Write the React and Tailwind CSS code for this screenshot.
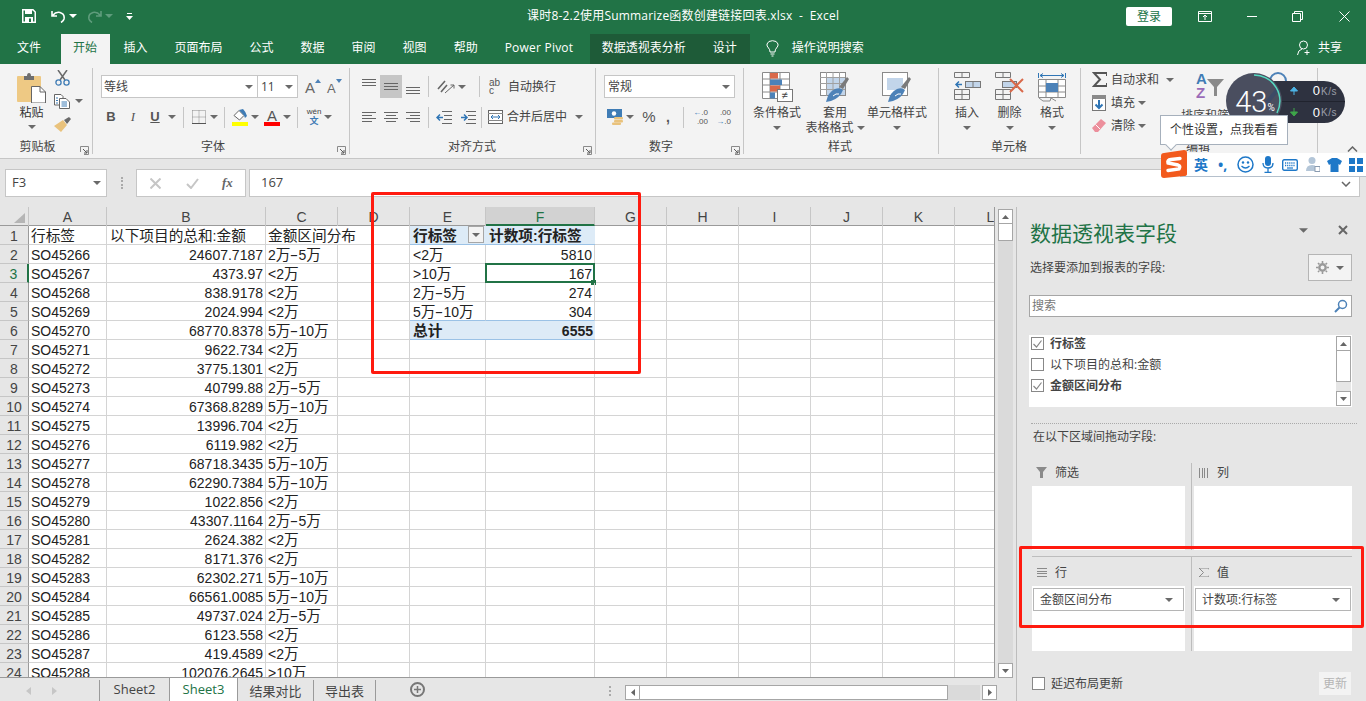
import React from 'react';

const rows = [
  ['SO45266', '24607.7187', '2万-5万'],
  ['SO45267', '4373.97', '<2万'],
  ['SO45268', '838.9178', '<2万'],
  ['SO45269', '2024.994', '<2万'],
  ['SO45270', '68770.8378', '5万-10万'],
  ['SO45271', '9622.734', '<2万'],
  ['SO45272', '3775.1301', '<2万'],
  ['SO45273', '40799.88', '2万-5万'],
  ['SO45274', '67368.8289', '5万-10万'],
  ['SO45275', '13996.704', '<2万'],
  ['SO45276', '6119.982', '<2万'],
  ['SO45277', '68718.3435', '5万-10万'],
  ['SO45278', '62290.7384', '5万-10万'],
  ['SO45279', '1022.856', '<2万'],
  ['SO45280', '43307.1164', '2万-5万'],
  ['SO45281', '2624.382', '<2万'],
  ['SO45282', '8171.376', '<2万'],
  ['SO45283', '62302.271', '5万-10万'],
  ['SO45284', '66561.0085', '5万-10万'],
  ['SO45285', '49737.024', '2万-5万'],
  ['SO45286', '6123.558', '<2万'],
  ['SO45287', '419.4589', '<2万'],
  ['SO45288', '102076.2645', '>10万'],
];

const pivot = {
  1: ['行标签', '计数项:行标签'],
  2: ['<2万', '5810'],
  3: ['>10万', '167'],
  4: ['2万-5万', '274'],
  5: ['5万-10万', '304'],
  6: ['总计', '6555'],
};

const cols = ['A', 'B', 'C', 'D', 'E', 'F', 'G', 'H', 'I', 'J', 'K', 'L'];
const gridCols = 'grid grid-rows-[19px] grid-cols-[29px_78px_159px_72px_72px_76px_109px_72px_72px_72px_72px_72px_72px]';

// the sheet font has wider CJK than latin and a long dash
const CellText = ({ text }) =>
  text.split(/([\u4e00-\u9fff]+|-)/).map((part, i) => {
    if (part === '-') {
      return <span key={i} className="inline-block w-[8px] text-center scale-x-[1.8]">-</span>;
    }
    if (/[\u4e00-\u9fff]/.test(part)) {
      return <span key={i} className="text-[14.67px]">{part}</span>;
    }
    return part;
  });

// small dropdown triangle
const Caret = ({ className = '', fill = '#6a6a6a' }) => (
  <svg width="8" height="4" viewBox="0 0 8 4" className={`shrink-0 ${className}`}>
    <path d="M0 0H8L4 4Z" fill={fill} />
  </svg>
);

const CaretSlot = ({ className = 'w-[10px]' }) => (
  <div className={`h-full flex items-center justify-center ${className}`}>
    <Caret />
  </div>
);

const Launcher = () => (
  <svg width="9" height="9" viewBox="0 0 9 9" className="absolute right-[3px] top-[8px]">
    <path d="M0.5 6V0.5H8.5V8.5H4" fill="none" stroke="#8a8a8a" />
    <path d="M3 3L7 7M7 4V7H4" fill="none" stroke="#5a5a5a" />
  </svg>
);

const Group = ({ className, label, labelClass = '', launcher = true, children }) => (
  <div className={`h-[86px] mt-[4px] border-r border-[#c6c6c6] flex flex-col shrink-0 ${className}`}>
    <div className="h-[70px]">{children}</div>
    <div className="h-[16px] relative">
      <div className={`pt-[1px] text-center text-[12px] leading-[16px] text-[#444] ${labelClass}`}>{label}</div>
      {launcher && <Launcher />}
    </div>
  </div>
);

const Sep = ({ className = '' }) => <div className={`w-px h-[21px] bg-[#c6c6c6] shrink-0 ${className}`} />;

const Lines = ({ bars, active = false }) => (
  <div className={`w-[22px] h-full flex items-center justify-center ${active ? 'bg-[#c6c6c6]' : ''}`}>
    <svg width="15" height="17" viewBox="0 0 15 17">
      {bars.map(([x, y, w], i) => (
        <rect key={i} x={x} y={y} width={w} height="1" fill="#666" />
      ))}
    </svg>
  </div>
);

const TopLines = [[0, 1, 14], [0, 4, 14], [0, 7, 14]];
const MidLines = [[0, 5, 14], [0, 8, 14], [0, 11, 14]];
const LowLines = [[0, 9, 14], [0, 12, 14], [0, 15, 14]];
const LeftLines = [[0, 3, 14], [0, 6, 10], [0, 9, 14], [0, 12, 10]];
const CenterLines = [[0, 3, 14], [2, 6, 10], [0, 9, 14], [2, 12, 10]];
const RightLines = [[0, 3, 14], [4, 6, 10], [0, 9, 14], [4, 12, 10]];

const PasteIcon = () => (
  <svg width="29" height="30" viewBox="0 0 29 30">
    <rect x="0" y="3" width="24" height="26" rx="1" fill="#eec984" />
    <path d="M7 3H10Q10 0 12 0Q14 0 14 3H17V7H7Z" fill="#6e6e6e" />
    <path d="M14.5 13.5H23L28.5 19V30H14.5Z" fill="#fff" stroke="#666" />
    <path d="M23 13.5V19H28.5" fill="none" stroke="#666" />
  </svg>
);

const CutIcon = () => (
  <svg width="15" height="16" viewBox="0 0 15 16">
    <path d="M3 0L10 10M12 0L5 10" stroke="#6a6a6a" strokeWidth="1.5" fill="none" />
    <circle cx="3.5" cy="12.5" r="2.6" stroke="#3f7cb5" strokeWidth="1.3" fill="none" />
    <circle cx="11.5" cy="12.5" r="2.6" stroke="#3f7cb5" strokeWidth="1.3" fill="none" />
  </svg>
);

const CopyIcon = () => (
  <svg width="16" height="15" viewBox="0 0 16 15">
    <path d="M0.5 0.5H7L9 2.5V11H0.5Z" fill="#fff" stroke="#666" />
    <path d="M5.5 4.5H12L15.5 8V14.5H5.5Z" fill="#fff" stroke="#666" />
    <path d="M2 4H4M2 6.5H4M2 9H4M7.5 8H13M7.5 10H13M7.5 12H13" stroke="#3f7cb5" />
  </svg>
);

const BrushIcon = () => (
  <svg width="17" height="15" viewBox="0 0 17 15">
    <path d="M10 3L15 0L17 2L13 7Z" fill="#6a6a6a" />
    <path d="M0 9L9 3L13 8L7 15Z" fill="#e9c27c" />
  </svg>
);

const BorderIcon = () => (
  <svg width="14" height="14" viewBox="0 0 14 14">
    <path d="M0.5 0.5H13.5V13M0.5 0.5V13M7 0.5V13M0.5 7H13.5" fill="none" stroke="#888" strokeDasharray="1 1" />
    <rect x="0" y="13" width="14" height="1" fill="#555" />
  </svg>
);

const FillIcon = () => (
  <svg width="16" height="17" viewBox="0 0 16 17">
    <path d="M2 6.5L7 1.5L12 6.5L7.5 11Z" fill="#fff" stroke="#666" />
    <path d="M7 1L11 0Q14 3 15 7L13 9L12 6.5Z" fill="#3f7cb5" />
    <rect x="0" y="13" width="16" height="4" fill="#ffff00" />
  </svg>
);

const FontColorIcon = () => (
  <div className="w-[16px] h-[17px] flex flex-col items-center">
    <span className="text-[15px] leading-[13px] text-[#555] font-['Liberation_Sans']">A</span>
    <span className="w-[16px] h-[4px] bg-[#ff0000]" />
  </div>
);

const OrientIcon = () => (
  <svg width="20" height="16" viewBox="0 0 20 16">
    <path d="M2 10L9 2M5 13L11 6" stroke="#666" strokeWidth="1.6" fill="none" />
    <path d="M9 14L18 6M18 6V9.5M18 6H14.5" stroke="#666" fill="none" />
  </svg>
);

const IndentIcon = ({ flip = false }) => (
  <svg width="16" height="13" viewBox="0 0 16 13">
    <path d="M6 0.5H16M8 4.5H16M8 8.5H16M6 12.5H16" stroke="#666" />
    {flip ? (
      <path d="M1 6.5H6M4 3.5L7 6.5L4 9.5" stroke="#2f75b5" strokeWidth="1.5" fill="none" />
    ) : (
      <path d="M1 6.5H7M4 3.5L1 6.5L4 9.5" stroke="#2f75b5" strokeWidth="1.5" fill="none" />
    )}
  </svg>
);

const MergeIcon = () => (
  <svg width="15" height="14" viewBox="0 0 15 14">
    <rect x="0.5" y="0.5" width="14" height="13" fill="#fff" stroke="#666" />
    <path d="M0 3.5H15M0 10.5H15" stroke="#888" />
    <path d="M3 7H12M5 5L3 7L5 9M10 5L12 7L10 9" stroke="#2f75b5" fill="none" />
  </svg>
);

const CurrencyIcon = () => (
  <svg width="17" height="16" viewBox="0 0 17 16">
    <rect x="0" y="0" width="15" height="9" fill="#3f7cb5" />
    <circle cx="7" cy="4.5" r="2.2" fill="#fff" />
    <rect x="7" y="8" width="9" height="2.5" rx="1" fill="#e9c27c" />
    <rect x="7" y="11" width="9" height="2.5" rx="1" fill="#e9c27c" />
    <rect x="5" y="13.5" width="9" height="2.5" rx="1" fill="#e9c27c" />
  </svg>
);

const CondIcon = () => (
  <div className="relative w-[31px] h-[30px]">
    <svg width="28" height="27" viewBox="0 0 28 27">
      <path d="M0.5 0.5H27.5V26.5H0.5ZM0.5 7H27.5M0.5 13H27.5M0.5 20H27.5M8 0V27M18 0V27" fill="#fff" stroke="#8a8a8a" />
      <rect x="8" y="1" width="8" height="5.5" fill="#d9694a" />
      <rect x="8" y="7.5" width="12" height="5.5" fill="#4d82b8" />
      <rect x="8" y="13.5" width="10" height="6" fill="#d9694a" />
      <rect x="8" y="20.5" width="5" height="6" fill="#4d82b8" />
    </svg>
    <span className="absolute right-0 bottom-0 w-[16px] h-[13px] bg-white border border-[#777] text-[11px] leading-[11px] text-center text-[#444] font-['Liberation_Sans']">≠</span>
  </div>
);

const TableFormatIcon = ({ plain = false }) => (
  <svg width="30" height="30" viewBox="0 0 30 30">
    <rect x="0.5" y="0.5" width="25" height="23" fill="#fff" stroke="#8a8a8a" />
    {plain ? (
      <rect x="5" y="6" width="16" height="12" fill="#c2d5ea" />
    ) : (
      <>
        <rect x="6" y="5" width="19" height="18" fill="#c2d5ea" />
        <path d="M0 5.5H25M0 11.5H25M0 17.5H25M6.5 0V24M13 0V24M19.5 0V24" stroke="#a0a0a0" />
      </>
    )}
    <path d="M19 15L27 5L29 7L23 17Z" fill="#7a7a7a" />
    <path d="M6 30Q8 20 15 17Q20 15 23 18Q20 26 11 29Z" fill="#4d82b8" />
    <path d="M13 24Q16 21 19 22" stroke="#fff" fill="none" />
  </svg>
);

const InsertIcon = () => (
  <svg width="27" height="28" viewBox="0 0 27 28">
    <path d="M0.5 0.5H15.5V5.5H0.5ZM8 0V5.5M0.5 17.5H15.5V27.5H0.5ZM8 17.5V27.5M0.5 22.5H15.5" fill="none" stroke="#777" />
    <rect x="11.5" y="9.5" width="15" height="6" fill="#c2d5ea" stroke="#777" />
    <path d="M19 9.5V15.5" stroke="#777" />
    <path d="M2 12.5H8M5 9.5L2 12.5L5 15.5" stroke="#2f75b5" strokeWidth="1.5" fill="none" />
  </svg>
);

const DeleteIcon = () => (
  <svg width="30" height="28" viewBox="0 0 30 28">
    <path d="M0.5 0.5H15.5V5.5H0.5ZM8 0V5.5M0.5 17.5H15.5V27.5H0.5ZM8 17.5V27.5M0.5 22.5H15.5" fill="none" stroke="#777" />
    <rect x="7.5" y="9.5" width="14" height="6" fill="#c2d5ea" stroke="#777" />
    <path d="M15 7L28 20M28 7L15 20" stroke="#d9694a" strokeWidth="2" />
  </svg>
);

const FormatIcon = () => (
  <svg width="28" height="30" viewBox="0 0 28 30">
    <path d="M0.5 1V6M27.5 1V6M2 3.5H26M5 1.5L2 3.5L5 5.5M23 1.5L26 3.5L23 5.5" fill="none" stroke="#2f75b5" />
    <path d="M0.5 7.5H27.5V25.5H0.5ZM0.5 14H27.5M0.5 20H27.5M8 7.5V25.5M20 7.5V25.5" fill="#fff" stroke="#8a8a8a" />
    <rect x="8" y="11" width="12" height="9" fill="#4d82b8" />
    <path d="M1 26L5 29H12L13 26M13 26L18 29" fill="none" stroke="#8a8a8a" />
  </svg>
);

const SigmaIcon = () => (
  <svg width="15" height="15" viewBox="0 0 15 15">
    <path d="M15 4V1H2L8 7.5L2 14H15V11" fill="none" stroke="#555" strokeWidth="2" />
  </svg>
);

const FillDownIcon = () => (
  <svg width="14" height="16" viewBox="0 0 14 16">
    <rect x="0.5" y="0.5" width="13" height="15" fill="#fff" stroke="#777" />
    <rect x="0" y="0" width="14" height="4" fill="#8a8a8a" />
    <path d="M7 5V13M3.5 9.5L7 13L10.5 9.5" stroke="#2f75b5" strokeWidth="2" fill="none" />
  </svg>
);

const EraserIcon = () => (
  <svg width="14" height="14" viewBox="0 0 14 14">
    <path d="M9 0L14 4L6 13L3 13L0 9Z" fill="#ec8f9c" />
    <path d="M3.5 5.5L8 10" stroke="#fff" />
  </svg>
);

const Check = () => (
  <svg width="9" height="8" viewBox="0 0 9 8">
    <path d="M0.5 4L3.5 7L8.5 0.5" fill="none" stroke="#888" strokeWidth="1.2" />
  </svg>
);

const Zone = ({ icon, label, children }) => (
  <div className="h-full flex flex-col">
    <div className="h-[23px] pb-[4px] flex items-center gap-[8px] pl-[4px] text-[12px] text-[#444] shrink-0">
      <span className="w-[11px] flex justify-center">{icon}</span>
      {label}
    </div>
    <div className="flex-1 bg-white pt-[2px] px-[1px]">{children}</div>
  </div>
);

const ZoneSelect = ({ text }) => (
  <div className="h-[23px] border border-[#b5b5b5] flex items-center justify-between pl-[6px] pr-[10px] text-[12px] text-[#444]">
    {text}
    <Caret />
  </div>
);

const Ribbon = () => (
  <div className="h-[95px] bg-[#f3f3f3] border-b border-[#c6c6c6] flex shrink-0">
    <Group className="w-[93px]" label="剪贴板" labelClass="pr-[17px]">
      <div className="flex pl-[17px]">
        <div className="w-[29px] flex flex-col items-center pt-[5px] text-[12px] leading-[16px] text-[#333]">
          <PasteIcon />
          <span className="mt-[2px] whitespace-nowrap">粘贴</span>
          <Caret className="mt-[4px]" />
        </div>
        <div className="ml-[8px] flex flex-col pt-[2px]">
          <div className="h-[24px] pl-[1px]"><CutIcon /></div>
          <div className="h-[23px] flex items-start">
            <CopyIcon />
            <Caret className="ml-[5px] mt-[5px]" />
          </div>
          <BrushIcon />
        </div>
      </div>
    </Group>

    <Group className="w-[257px] pl-[7px]" label="字体" labelClass="pr-[23px]">
      <div className="flex pl-[1px] pt-[7px] h-[30px]">
        <div className="w-[157px] h-[23px] bg-white border border-[#c6c6c6] flex items-center justify-between pl-[2px] pr-[4px] text-[12px] text-[#444]">
          等线<Caret />
        </div>
        <div className="w-[40px] h-[23px] bg-white border border-l-0 border-[#c6c6c6] flex items-center justify-between pl-[3px] pr-[4px] text-[12px] text-[#444]">
          11<Caret />
        </div>
        <div className="flex ml-[7px] font-['Liberation_Sans'] text-[#666]">
          <span className="text-[15px] leading-[23px] pt-[1px]">A</span>
          <svg width="6" height="4" viewBox="0 0 6 4" className="mt-[4px]"><path d="M0 4H6L3 0Z" fill="#4d82b8" /></svg>
          <span className="text-[13px] leading-[23px] pt-[2px] ml-[6px]">A</span>
          <svg width="6" height="4" viewBox="0 0 6 4" className="mt-[4px]"><path d="M0 0H6L3 4Z" fill="#4d82b8" /></svg>
        </div>
      </div>
      <div className="flex items-center h-[24px] mt-[7px] font-['Liberation_Sans'] text-[#555]">
        <span className="w-[22px] text-center text-[13px] font-bold">B</span>
        <span className="w-[22px] text-center text-[13px] italic font-['Liberation_Serif']">I</span>
        <span className="w-[22px] text-center text-[13px] font-bold underline">U</span>
        <CaretSlot className="w-[12px]" />
        <Sep className="ml-[5px]" />
        <div className="ml-[8px] w-[14px]"><BorderIcon /></div>
        <CaretSlot className="ml-[4px]" />
        <Sep className="ml-[6px]" />
        <div className="ml-[7px] w-[16px]"><FillIcon /></div>
        <CaretSlot className="ml-[3px]" />
        <div className="ml-[5px]"><FontColorIcon /></div>
        <CaretSlot className="ml-[3px]" />
        <Sep className="ml-[6px]" />
        <div className="ml-[8px] w-[16px] flex flex-col items-center">
          <span className="text-[8px] leading-[8px] text-[#444]">wén</span>
          <span className="text-[9px] leading-[10px] text-[#3f7cb5] font-['Noto_Sans_CJK_SC'] font-bold">文</span>
        </div>
        <CaretSlot className="ml-[2px]" />
      </div>
    </Group>

    <Group className="w-[246px] pl-[8px]" label="对齐方式" labelClass="pr-[9px]">
      <div className="flex items-center h-[23px] mt-[7px] text-[12px] text-[#444]">
        <Lines bars={TopLines} />
        <Lines bars={MidLines} active />
        <Lines bars={LowLines} />
        <Sep className="ml-[4px]" />
        <div className="ml-[7px]"><OrientIcon /></div>
        <CaretSlot className="ml-[2px]" />
        <Sep className="ml-[13px]" />
        <div className="ml-[9px] w-[14px] font-['Liberation_Sans'] text-[10px] leading-[8px] text-[#555]">ab<br />c</div>
        <span className="ml-[5px] whitespace-nowrap">自动换行</span>
      </div>
      <div className="flex items-center h-[24px] mt-[7px] text-[12px] text-[#444]">
        <Lines bars={LeftLines} />
        <Lines bars={CenterLines} />
        <Lines bars={RightLines} />
        <Sep className="ml-[4px]" />
        <div className="ml-[7px]"><IndentIcon /></div>
        <div className="ml-[8px]"><IndentIcon flip /></div>
        <Sep className="ml-[5px]" />
        <div className="ml-[6px]"><MergeIcon /></div>
        <span className="ml-[4px] whitespace-nowrap">合并后居中</span>
        <Caret className="ml-[8px]" />
      </div>
    </Group>

    <Group className="w-[148px] pl-[8px]" label="数字" labelClass="pr-[25px]">
      <div className="mt-[7px] w-[131px] h-[23px] bg-white border border-[#c6c6c6] flex items-center justify-between pl-[3px] pr-[4px] text-[12px] text-[#444]">
        常规<Caret />
      </div>
      <div className="flex items-center h-[24px] mt-[7px] pl-[3px] font-['Liberation_Sans'] text-[#555]">
        <CurrencyIcon />
        <CaretSlot className="ml-[2px]" />
        <span className="ml-[7px] w-[16px] text-center text-[15px]">%</span>
        <span className="ml-[6px] w-[10px] text-center text-[14px] font-bold leading-[14px]">,</span>
        <Sep className="ml-[10px]" />
        <div className="ml-[7px] w-[17px] text-[8px] leading-[9px] text-right">
          <span className="text-[#2f75b5]">←</span>.0<br />.00
        </div>
        <div className="ml-[5px] w-[18px] text-[8px] leading-[9px] text-right">
          .00<br /><span className="text-[#2f75b5]">→</span>.0
        </div>
      </div>
    </Group>

    <Group className="w-[195px] pl-[6px]" label="样式" labelClass="pr-[8px]" launcher={false}>
      <div className="flex text-[12px] leading-[15px] text-[#444] pt-[4px]">
        <div className="w-[54px] flex flex-col items-center">
          <div className="h-[33px]"><CondIcon /></div>
          <span className="whitespace-nowrap">条件格式</span>
          <Caret className="mt-[6px]" />
        </div>
        <div className="w-[62px] flex flex-col items-center">
          <div className="h-[33px]"><TableFormatIcon /></div>
          <span className="whitespace-nowrap">套用</span>
          <span className="whitespace-nowrap flex items-center">表格格式<Caret className="ml-[3px]" /></span>
        </div>
        <div className="w-[62px] flex flex-col items-center">
          <div className="h-[33px]"><TableFormatIcon plain /></div>
          <span className="whitespace-nowrap">单元格样式</span>
          <Caret className="mt-[6px]" />
        </div>
      </div>
    </Group>

    <Group className="w-[142px] pl-[7px]" label="单元格" labelClass="pr-[8px]" launcher={false}>
      <div className="flex text-[12px] leading-[15px] text-[#444] pt-[4px]">
        <div className="w-[42px] flex flex-col items-center">
          <div className="h-[33px]"><InsertIcon /></div>
          插入
          <Caret className="mt-[6px]" />
        </div>
        <div className="w-[43px] flex flex-col items-center">
          <div className="h-[33px]"><DeleteIcon /></div>
          删除
          <Caret className="mt-[6px]" />
        </div>
        <div className="w-[42px] flex flex-col items-center">
          <div className="h-[33px]"><FormatIcon /></div>
          格式
          <Caret className="mt-[6px]" />
        </div>
      </div>
    </Group>

    <Group className="w-[237px] pl-[11px]" label="编辑" labelClass="pr-[13px]" launcher={false}>
      <div className="flex text-[12px] text-[#444]">
        <div className="w-[89px]">
          <div className="h-[23px] flex items-center">
            <SigmaIcon /><span className="ml-[4px]">自动求和</span><Caret className="ml-[7px]" />
          </div>
          <div className="h-[23px] flex items-center">
            <FillDownIcon /><span className="ml-[5px]">填充</span><Caret className="ml-[3px]" />
          </div>
          <div className="h-[23px] flex items-center">
            <EraserIcon /><span className="ml-[5px]">清除</span><Caret className="ml-[3px]" />
          </div>
        </div>
        <div className="w-[60px] flex flex-col items-center pt-[4px]">
          <div className="h-[32px] w-[30px] flex font-['Liberation_Sans'] font-bold text-[15px] leading-[14px]">
            <div className="flex flex-col">
              <span className="text-[#3f7cb5]">A</span>
              <span className="text-[#9b6bb8]">Z</span>
            </div>
            <svg width="17" height="17" viewBox="0 0 17 17" className="mt-[7px]">
              <path d="M0 0H17L10 8V17H7V8Z" fill="#8a8a8a" />
            </svg>
          </div>
          <span className="whitespace-nowrap mt-[3px]">排序和筛选</span>
        </div>
        <div className="w-[60px] ml-[6px] flex flex-col items-center pt-[4px]">
          <div className="h-[32px]">
            <svg width="22" height="30" viewBox="0 0 22 30">
              <circle cx="12" cy="9" r="8" fill="none" stroke="#4d82b8" strokeWidth="2" />
              <path d="M6 15L0 24" stroke="#6a6a6a" strokeWidth="3" />
            </svg>
          </div>
          <span className="whitespace-nowrap mt-[3px]">查找和选择</span>
        </div>
      </div>
    </Group>

    <div className="flex-1 flex items-end justify-end pr-[8px] pb-[6px]">
      <svg width="11" height="6" viewBox="0 0 11 6"><path d="M1 5.5L5.5 1L10 5.5" fill="none" stroke="#666" strokeWidth="1.5" /></svg>
    </div>
  </div>
);

const SheetGrid = () => (
  <div className="w-[995px] h-[471px] overflow-hidden border-r border-b border-[#9a9a9a] bg-white font-['Liberation_Sans','Noto_Sans_CJK_SC',sans-serif] text-[14px] text-[#222]">
    <div className={`${gridCols} h-[19px] bg-[#e6e6e6] border-b border-[#9a9a9a] text-[#444] leading-[20px]`}>
      <div className="border-r border-[#c6c6c6] flex items-end justify-end pr-[3px] pb-[3px]">
        <svg width="11" height="10" viewBox="0 0 11 10"><path d="M11 0V10H0Z" fill="#b5b5b5" /></svg>
      </div>
      {cols.map((c) => (
        <div
          key={c}
          className={`text-center border-r border-[#c6c6c6] ${c === 'F' ? 'bg-[#d2d2d2] text-[#217346] border-b-2 border-b-[#217346]' : ''}`}
        >
          {c}
        </div>
      ))}
    </div>
    {[['行标签', '以下项目的总和:金额', '金额区间分布'], ...rows].map((r, i) => {
      const n = i + 1;
      const p = pivot[n];
      const band = n === 1 || n === 6;
      return (
        <div key={n} className={`${gridCols} h-[19px] leading-[20px]`}>
          <div className={`text-center text-[#444] bg-[#e6e6e6] border-b border-[#c6c6c6] ${n === 3 ? 'bg-[#d2d2d2] text-[#217346] border-r-2 border-r-[#217346]' : 'border-r border-r-[#9a9a9a]'}`}>
            {n}
          </div>
          <div className="pl-[2px] border-r border-b border-[#d4d4d4] whitespace-nowrap"><CellText text={r[0]} /></div>
          <div className={`border-r border-b border-[#d4d4d4] whitespace-nowrap ${n === 1 ? 'pl-[3px]' : 'text-right pr-[2px]'}`}><CellText text={r[1]} /></div>
          <div className={`pl-[2px] border-b border-[#d4d4d4] whitespace-nowrap ${n === 1 ? '' : 'border-r'}`}><CellText text={r[2]} /></div>
          <div className="border-r border-b border-[#d4d4d4]" />
          {p ? (
            <>
              <div className={`pl-[3px] whitespace-nowrap flex justify-between ${band ? 'bg-[#ddebf7] font-bold border-b border-[#9bc2e6]' : 'border-b border-[#d4d4d4] border-r'} ${n === 5 ? 'border-b-[#9bc2e6]' : ''}`}>
                <span><CellText text={p[0]} /></span>
                {n === 1 && (
                  <span className="w-[16px] h-[17px] mr-[2px] bg-[#f3f3f3] border border-[#a6a6a6] flex items-center justify-center">
                    <Caret />
                  </span>
                )}
              </div>
              <div className={`relative whitespace-nowrap ${n === 1 ? 'pl-[3px]' : 'text-right pr-[2px]'} ${band ? 'bg-[#ddebf7] font-bold border-b border-[#9bc2e6]' : 'border-b border-r border-[#d4d4d4]'} ${n === 5 ? 'border-b-[#9bc2e6]' : ''}`}>
                <CellText text={p[1]} />
                {n === 3 && (
                  <>
                    <span className="absolute -left-[1px] -top-[1px] -right-[1px] -bottom-[1px] border-2 border-[#217346]" />
                    <span className="absolute -right-[2px] -bottom-[3px] w-[5px] h-[5px] bg-[#217346]" />
                  </>
                )}
              </div>
            </>
          ) : (
            <>
              <div className="border-r border-b border-[#d4d4d4]" />
              <div className="border-r border-b border-[#d4d4d4]" />
            </>
          )}
          {[0, 1, 2, 3, 4, 5].map((k) => (
            <div key={k} className="border-r border-b border-[#d4d4d4]" />
          ))}
        </div>
      );
    })}
  </div>
);

const SheetTabs = () => (
  <div className="h-[23px] flex text-[13px] text-[#444] bg-[#e6e6e6]">
    <div className="w-[100px] flex items-center pl-[26px] gap-[21px] border-r border-[#9a9a9a] h-[21px] mt-[2px] shrink-0">
      <svg width="5" height="8" viewBox="0 0 5 8"><path d="M5 0V8L0 4Z" fill="#c6c6c6" /></svg>
      <svg width="5" height="8" viewBox="0 0 5 8"><path d="M0 0V8L5 4Z" fill="#c6c6c6" /></svg>
    </div>
    <div className="w-[69px] text-center leading-[22px] shrink-0">Sheet2</div>
    <div className="w-[69px] text-center leading-[22px] bg-white text-[#217346] border-x border-[#9a9a9a] shrink-0">Sheet3</div>
    <div className="w-[76px] text-center leading-[22px] border-r border-[#9a9a9a] h-[21px] mt-[2px] shrink-0">结果对比</div>
    <div className="w-[62px] text-center leading-[22px] border-r border-[#9a9a9a] h-[21px] mt-[2px] shrink-0">导出表</div>
    <div className="ml-[34px] mt-[4px] w-[15px] h-[15px] rounded-full border-2 border-[#777] flex items-center justify-center shrink-0">
      <svg width="7" height="7" viewBox="0 0 7 7"><path d="M3.5 0V7M0 3.5H7" stroke="#777" strokeWidth="1.5" /></svg>
    </div>
    <div className="ml-[184px] mt-[8px] w-[2px] h-[10px] border-l-2 border-dotted border-[#aaa] shrink-0" />
    <div className="ml-[14px] mt-[7px] h-[15px] w-[372px] flex shrink-0">
      <div className="w-[15px] h-[15px] bg-white border border-[#a6a6a6] flex items-center justify-center">
        <svg width="4" height="7" viewBox="0 0 4 7"><path d="M4 0V7L0 3.5Z" fill="#666" /></svg>
      </div>
      <div className="w-[308px] h-[15px] bg-white border border-l-0 border-[#a6a6a6]" />
      <div className="w-[32px] h-[15px] bg-[#dadada]" />
      <div className="ml-[2px] w-[15px] h-[15px] bg-white border border-[#a6a6a6] flex items-center justify-center">
        <svg width="4" height="7" viewBox="0 0 4 7"><path d="M0 0V7L4 3.5Z" fill="#666" /></svg>
      </div>
    </div>
  </div>
);

const VScroll = () => (
  <div className="ml-[3px] mt-[2px] w-[15px] h-[469px] flex flex-col bg-[#dadada] shrink-0">
    <div className="h-[15px] bg-white border border-[#a6a6a6] flex items-center justify-center">
      <svg width="7" height="4" viewBox="0 0 7 4"><path d="M0 4H7L3.5 0Z" fill="#666" /></svg>
    </div>
    <div className="h-[17px] bg-white border border-t-0 border-[#a6a6a6]" />
    <div className="flex-1" />
    <div className="h-[15px] bg-white border border-[#a6a6a6] flex items-center justify-center">
      <svg width="7" height="4" viewBox="0 0 7 4"><path d="M0 0H7L3.5 4Z" fill="#666" /></svg>
    </div>
  </div>
);

const FieldPanel = () => (
  <div className="w-[350px] h-[494px] border-l border-[#bdbdbd] bg-[#e6e6e6] pl-[13px] text-[12px] text-[#444] shrink-0">
    <div className="h-[28px] mt-[12px] flex items-center justify-between pr-[18px]">
      <span className="text-[21px] text-[#217346] leading-[28px]">数据透视表字段</span>
      <div className="flex items-center gap-[30px] -mt-[6px]">
        <Caret className="w-[9px] h-[5px]" />
        <svg width="10" height="10" viewBox="0 0 10 10"><path d="M1 1L9 9M9 1L1 9" stroke="#666" strokeWidth="2" /></svg>
      </div>
    </div>
    <div className="h-[27px] mt-[7px] flex items-center justify-between pr-[14px]">
      <span>选择要添加到报表的字段:</span>
      <div className="w-[44px] h-[27px] border border-[#b5b5b5] bg-[#f3f3f3] flex items-center justify-center gap-[7px]">
        <svg width="13" height="13" viewBox="0 0 13 13">
          <circle cx="6.5" cy="6.5" r="3.2" fill="none" stroke="#999" strokeWidth="2.4" />
          <path d="M6.5 0V13M0 6.5H13M2 2L11 11M11 2L2 11" stroke="#999" strokeWidth="1.6" strokeDasharray="2 9" />
        </svg>
        <Caret />
      </div>
    </div>
    <div className="h-[22px] mt-[14px] -ml-[1px] mr-[14px] bg-white border border-[#a6a6a6] flex items-center justify-between pl-[2px] pr-[3px] text-[#777]">
      搜索
      <svg width="14" height="14" viewBox="0 0 14 14">
        <circle cx="8.5" cy="5.5" r="4" fill="none" stroke="#4d82b8" strokeWidth="1.5" />
        <path d="M5.5 8.5L1 13" stroke="#4d82b8" strokeWidth="2" />
      </svg>
    </div>
    <div className="h-[72px] mt-[18px] -ml-[1px] mr-[14px] bg-white flex justify-between pl-[2px] pt-[1px] pr-[1px]">
      <div className="flex flex-col -mt-[3px]">
        <div className="h-[21px] flex items-center gap-[6px] font-bold">
          <span className="w-[13px] h-[13px] border border-[#888] flex items-center justify-center"><Check /></span>行标签
        </div>
        <div className="h-[21px] flex items-center gap-[6px]">
          <span className="w-[13px] h-[13px] border border-[#888]" />以下项目的总和:金额
        </div>
        <div className="h-[21px] flex items-center gap-[6px] font-bold">
          <span className="w-[13px] h-[13px] border border-[#888] flex items-center justify-center"><Check /></span>金额区间分布
        </div>
      </div>
      <div className="w-[15px] h-[70px] bg-[#e6e6e6] flex flex-col">
        <div className="h-[15px] bg-white border border-[#a6a6a6] flex items-center justify-center">
          <svg width="7" height="4" viewBox="0 0 7 4"><path d="M0 4H7L3.5 0Z" fill="#666" /></svg>
        </div>
        <div className="h-[31px] bg-white border border-t-0 border-[#a6a6a6]" />
        <div className="flex-1" />
        <div className="h-[15px] bg-white border border-[#a6a6a6] flex items-center justify-center">
          <svg width="7" height="4" viewBox="0 0 7 4"><path d="M0 0H7L3.5 4Z" fill="#666" /></svg>
        </div>
      </div>
    </div>
    <div className="mt-[16px] ml-[1px] mr-[9px] border-t border-dotted border-[#aaa]" />
    <div className="mt-[5px] ml-[3px] h-[16px] leading-[16px]">在以下区域间拖动字段:</div>

    <div className="mt-[18px] ml-[2px] mr-[14px] flex h-[87px]">
      <div className="w-[160px] border-r border-[#bdbdbd] pr-[6px]">
        <Zone
          label="筛选"
          icon={<svg width="11" height="11" viewBox="0 0 11 11"><path d="M0 0H11L7 5V11H4V5Z" fill="#8a8a8a" /></svg>}
        />
      </div>
      <div className="flex-1 pl-[2px]">
        <Zone
          label="列"
          icon={<svg width="9" height="10" viewBox="0 0 9 10"><path d="M0 0H1V10H0ZM3 0H4V10H3ZM5 0H6V10H5ZM8 0H9V10H8Z" fill="#8a8a8a" /></svg>}
        />
      </div>
    </div>
    <div className="mt-[6px] ml-[2px] mr-[14px] border-t border-[#bdbdbd]" />
    <div className="ml-[2px] mr-[14px] flex h-[94px]">
      <div className="w-[160px] border-r border-[#bdbdbd] pr-[6px]">
        <div className="h-[6px]" />
        <div className="h-[88px]">
          <Zone
            label="行"
            icon={<svg width="10" height="9" viewBox="0 0 10 9"><path d="M0 0H10V1H0ZM0 3H10V4H0ZM0 5H10V6H0ZM0 8H10V9H0Z" fill="#8a8a8a" /></svg>}
          >
            <ZoneSelect text="金额区间分布" />
          </Zone>
        </div>
      </div>
      <div className="flex-1 pl-[2px]">
        <div className="h-[6px]" />
        <div className="h-[88px]">
          <Zone
            label="值"
            icon={<svg width="10" height="9" viewBox="0 0 10 9"><path d="M10 1.5V0H0L4.5 4.5L0 9H10V7.5" fill="none" stroke="#8a8a8a" /></svg>}
          >
            <ZoneSelect text="计数项:行标签" />
          </Zone>
        </div>
      </div>
    </div>
    <div className="mt-[21px] ml-[2px] mr-[15px] h-[23px] flex items-center justify-between">
      <div className="flex items-center gap-[6px]">
        <span className="w-[13px] h-[13px] bg-white border border-[#888]" />延迟布局更新
      </div>
      <div className="w-[32px] h-[23px] bg-[#f3f3f3] text-center leading-[23px] text-[#b5b5b5]">更新</div>
    </div>
  </div>
);

export default function App() {
  return (
    <div className="relative w-[1366px] h-[701px] overflow-hidden bg-[#e6e6e6] flex flex-col [font-family:'Open_Sans','Noto_Sans_CJK_SC',sans-serif]">
      {/* title bar */}
      <div className="h-[34px] pb-[2px] bg-[#217346] flex items-center text-white shrink-0">
        <div className="w-[527px] flex items-center pl-[22px] shrink-0">
          <svg width="14" height="14" viewBox="0 0 14 14">
            <path d="M0.75 0.75H11L13.25 3V13.25H0.75Z" fill="none" stroke="#fff" strokeWidth="1.5" />
            <rect x="3" y="1" width="7" height="4" fill="#fff" />
            <rect x="3" y="8" width="8" height="5" fill="#fff" />
            <rect x="7" y="9.5" width="2" height="3.5" fill="#217346" />
          </svg>
          <svg width="15" height="13" viewBox="0 0 15 13" className="ml-[15px]">
            <path d="M1 1V6H6M1.5 5.5Q5 1.5 9 2.5Q14 4 13 9Q12.5 11 10 12.5" fill="none" stroke="#fff" strokeWidth="1.6" />
          </svg>
          <Caret className="ml-[3px]" fill="#fff" />
          <svg width="15" height="13" viewBox="0 0 15 13" className="ml-[10px]">
            <path d="M14 1V6H9M13.5 5.5Q10 1.5 6 2.5Q1 4 2 9Q2.5 11 5 12.5" fill="none" stroke="#5f9c7c" strokeWidth="1.6" />
          </svg>
          <Caret className="ml-[3px]" fill="#5f9c7c" />
          <svg width="7" height="7" viewBox="0 0 7 7" className="ml-[13px]">
            <path d="M1 0.5H6" stroke="#fff" />
            <path d="M0 3H7L3.5 7Z" fill="#fff" />
          </svg>
        </div>
        <div className="w-[311px] text-[12px] whitespace-nowrap tracking-[0.2px] shrink-0">课时8-2.2使用Summarize函数创建链接回表.xlsx&nbsp; -&nbsp; Excel</div>
        <div className="flex-1 flex items-center pl-[288px]">
          <div className="w-[46px] h-[19px] bg-white rounded-[2px] text-[#217346] text-[12px] leading-[19px] text-center shrink-0">登录</div>
          <svg width="14" height="11" viewBox="0 0 14 11" className="ml-[26px] shrink-0">
            <path d="M0.5 0.5H13.5V10.5H0.5ZM0 2.5H14" fill="none" stroke="#fff" />
            <path d="M7 9V4.5M5 6L7 4L9 6" fill="none" stroke="#fff" />
          </svg>
          <div className="ml-[35px] w-[10px] h-px bg-white shrink-0" />
          <svg width="11" height="11" viewBox="0 0 11 11" className="ml-[35px] shrink-0">
            <path d="M0.5 2.5H8.5V10.5H0.5ZM2.5 2.5V0.5H10.5V8.5H8.5" fill="none" stroke="#fff" />
          </svg>
          <svg width="11" height="11" viewBox="0 0 11 11" className="ml-[36px] shrink-0">
            <path d="M0.5 0.5L10.5 10.5M10.5 0.5L0.5 10.5" stroke="#fff" />
          </svg>
        </div>
      </div>

      {/* ribbon tabs */}
      <div className="h-[30px] bg-[#217346] flex items-stretch text-white text-[12px] leading-[28px] shrink-0">
        <div className="ml-[4.5px] px-[12.5px]">文件</div>
        <div className="ml-[7px] px-[12.5px] bg-[#f3f3f3] text-[#217346]">开始</div>
        <div className="ml-[1.5px] px-[12.5px]">插入</div>
        <div className="ml-[2px] px-[12.5px]">页面布局</div>
        <div className="ml-[2px] px-[12.5px]">公式</div>
        <div className="ml-[2px] px-[12.5px]">数据</div>
        <div className="ml-[2px] px-[12.5px]">审阅</div>
        <div className="ml-[2px] px-[12.5px]">视图</div>
        <div className="ml-[2px] px-[12.5px]">帮助</div>
        <div className="ml-[2px] px-[12.5px] tracking-[0.22px]">Power Pivot</div>
        <div className="ml-[4px] w-[160px] bg-[#1e5b38] pl-[12px] flex gap-[27px]">
          <span>数据透视表分析</span>
          <span>设计</span>
        </div>
        <div className="ml-[16px] flex items-center pb-[2px]">
          <svg width="13" height="17" viewBox="0 0 13 17">
            <path d="M4 12Q4 9.5 2.5 8Q0.5 6 1 4Q2 0.7 6.5 0.7Q11 0.7 12 4Q12.5 6 10.5 8Q9 9.5 9 12Z" fill="none" stroke="#fff" />
            <path d="M4.5 14H8.5M5.5 16H7.5" stroke="#fff" />
          </svg>
          <span className="ml-[13px]">操作说明搜索</span>
        </div>
        <div className="ml-auto mr-[24px] flex items-center pb-[2px]">
          <svg width="14" height="16" viewBox="0 0 14 16">
            <circle cx="6.5" cy="5" r="4" fill="none" stroke="#fff" />
            <path d="M0.5 15Q1 10 5 9M10 10V15M7.5 12.5H12.5" fill="none" stroke="#fff" />
          </svg>
          <span className="ml-[7px]">共享</span>
        </div>
      </div>

      <Ribbon />

      {/* formula bar */}
      <div className="h-[48px] flex items-start pt-[10px] pl-[5px] shrink-0 text-[12px] text-[#444]">
        <div className="w-[102px] h-[28px] bg-white border border-[#c6c6c6] flex items-center justify-between pl-[6px] pr-[5px] text-[13px]">
          F3
          <Caret />
        </div>
        <div className="ml-[14px] mt-[8px] h-[12px] border-l-2 border-dotted border-[#aaa]" />
        <div className="ml-[13px] w-[110px] h-[28px] bg-white border border-[#c6c6c6] flex items-center text-[#bdbdbd]">
          <svg width="11" height="11" viewBox="0 0 11 11" className="ml-[13px]"><path d="M0.5 0.5L10.5 10.5M10.5 0.5L0.5 10.5" stroke="#c6c6c6" strokeWidth="2" /></svg>
          <svg width="13" height="11" viewBox="0 0 13 11" className="ml-[25px]"><path d="M1 6L5 10L12 1" fill="none" stroke="#c6c6c6" strokeWidth="2" /></svg>
          <span className="ml-[23px] text-[13px] italic font-['Liberation_Serif'] font-bold text-[#666]">fx</span>
        </div>
        <div className="ml-[3px] w-[1111px] h-[28px] bg-white border border-[#c6c6c6] pl-[11px] flex items-center justify-between pr-[8px] text-[13px]">
          167
          <svg width="10" height="6" viewBox="0 0 10 6" className="mt-[2px]"><path d="M1 1L5 5L9 1" fill="none" stroke="#666" strokeWidth="1.5" /></svg>
        </div>
      </div>

      {/* sheet and field list */}
      <div className="flex h-[494px]">
        <div className="w-[1016px] shrink-0">
          <div className="flex">
            <SheetGrid />
            <VScroll />
          </div>
          <SheetTabs />
        </div>
        <FieldPanel />
      </div>

      {/* red annotation boxes */}
      <div className="absolute left-[371px] top-[192px] w-[270px] h-[182px] border-[3px] border-[#ff1a0f] rounded-[2px]" />
      <div className="absolute left-[1019px] top-[546px] w-[345px] h-[82px] border-[3px] border-[#ff1a0f] rounded-[2px]" />

      {/* network speed widget */}
      <div className="absolute left-[1253px] top-[81px] w-[92px] h-[42px] rounded-r-[21px] bg-[#2e3240] text-white font-['Liberation_Sans']">
        <div className="h-[21px] border-b border-[#20232e] flex items-center justify-end pr-[8px] gap-[1px]">
          <span className="text-[13px]">0</span><span className="text-[10px] tracking-[0.5px] text-[#9a9da8]">K/s</span>
        </div>
        <div className="h-[21px] flex items-center justify-end pr-[8px] gap-[1px]">
          <span className="text-[13px]">0</span><span className="text-[10px] tracking-[0.5px] text-[#9a9da8]">K/s</span>
        </div>
        <svg width="8" height="8" viewBox="0 0 8 8" className="absolute left-[37px] top-[6px]"><path d="M4 8V3M0.5 4L4 0L7.5 4Z" fill="#4db4e6" stroke="#4db4e6" /></svg>
        <svg width="8" height="8" viewBox="0 0 8 8" className="absolute left-[37px] top-[27px]"><path d="M4 0V5M0.5 4L4 8L7.5 4Z" fill="#3fa64a" stroke="#3fa64a" /></svg>
      </div>
      <div className="absolute left-[1226px] top-[73px] w-[56px] h-[56px] rounded-full bg-[#4a4e5f] flex items-center justify-center text-white font-['Roboto']">
        <svg width="56" height="56" viewBox="0 0 56 56" className="absolute left-0 top-0">
          <path d="M34 38L52 16" stroke="#3d4a66" strokeWidth="4" />
          <path d="M28 2A26 26 0 0 1 51 40" fill="none" stroke="#55d9c0" strokeWidth="1.5" />
        </svg>
        <span className="relative text-[29px] font-light leading-none ml-[2px] mt-[3px]">43</span>
        <span className="relative text-[10px] mt-[13px]">%</span>
      </div>

      {/* sogou tooltip */}
      <div className="absolute left-[1160px] top-[115px] w-[128px] h-[30px] bg-white border border-[#a6b0bc] text-[12px] leading-[28px] text-center text-[#333]">
        个性设置，点我看看
        <span className="absolute left-[6px] -bottom-[5px] w-[8px] h-[8px] bg-white border-r border-b border-[#a6b0bc] rotate-45" />
      </div>

      {/* sogou input bar */}
      <div className="absolute left-[1180px] top-[153px] w-[186px] h-[24px] bg-white border-b border-[#b5c0cc] flex items-center text-[#1e78c8]">
        <span className="ml-[14px] text-[14px] font-bold">英</span>
        <span className="ml-[10px] text-[14px] font-bold w-[11px] leading-none">•,</span>
        <svg width="17" height="17" viewBox="0 0 17 17" className="ml-[8px]">
          <circle cx="8.5" cy="8.5" r="7.5" fill="none" stroke="#1e78c8" strokeWidth="1.5" />
          <circle cx="6" cy="6.5" r="1.2" fill="#1e78c8" />
          <circle cx="11" cy="6.5" r="1.2" fill="#1e78c8" />
          <path d="M4.5 10Q8.5 14 12.5 10" fill="none" stroke="#1e78c8" strokeWidth="1.3" />
        </svg>
        <svg width="12" height="17" viewBox="0 0 12 17" className="ml-[8px]">
          <rect x="3" y="0" width="6" height="10" rx="3" fill="#1e78c8" />
          <path d="M1 7Q1 12 6 12Q11 12 11 7M6 12V16M2.5 16.5H9.5" fill="none" stroke="#1e78c8" strokeWidth="1.3" />
        </svg>
        <svg width="16" height="12" viewBox="0 0 16 12" className="ml-[8px]">
          <rect x="0.7" y="0.7" width="14.6" height="10.6" rx="1.5" fill="none" stroke="#1e78c8" strokeWidth="1.4" />
          <path d="M3 4H13M3 6.5H13" stroke="#1e78c8" strokeWidth="1.4" strokeDasharray="1.2 0.9" />
          <path d="M5 9H11" stroke="#1e78c8" strokeWidth="1.2" />
        </svg>
        <svg width="14" height="15" viewBox="0 0 14 15" className="ml-[8px]">
          <circle cx="6" cy="3.5" r="3.5" fill="#b4c6d8" />
          <path d="M0 14Q0 8 6 8Q8 8 9 8.5V14Z" fill="#b4c6d8" />
          <rect x="9" y="9.5" width="5" height="5" fill="#fff" stroke="#8a9bb0" />
        </svg>
        <svg width="15" height="14" viewBox="0 0 15 14" className="ml-[7px]">
          <path d="M5 0H10L15 3L13 7L11.5 6V14H3.5V6L2 7L0 3Z" fill="#1e78c8" />
        </svg>
        <svg width="14" height="14" viewBox="0 0 14 14" className="ml-[7px]">
          <path d="M0 0H6V6H0ZM8 0H14V6H8ZM0 8H6V14H0ZM8 8H14V14H8Z" fill="#1e78c8" />
        </svg>
      </div>
      <svg width="28" height="28" viewBox="0 0 28 28" className="absolute left-[1160px] top-[150px]">
        <path d="M4 3L24 0Q27 0 27 3L27 24Q27 26 24 26L4 28Q1 28 1 25L1 6Q1 3 4 3Z" fill="#f25a1d" />
        <path d="M20 8.5L11 9.5Q7 10 8 13L18 15Q21 16 19 19L8 20.5" fill="none" stroke="#fff" strokeWidth="3.4" strokeLinecap="round" />
      </svg>
    </div>
  );
}
